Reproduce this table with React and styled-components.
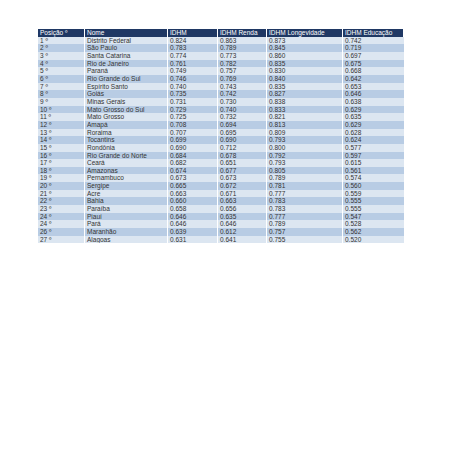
import React from "react";
import styled, { createGlobalStyle } from "styled-components";

const GlobalStyle = createGlobalStyle`
  html, body {
    margin: 0;
    padding: 0;
    background: #ffffff;
  }
`;

const Page = styled.div`
  width: 452px;
  height: 452px;
  padding: 29px 0 0 38px;
  box-sizing: border-box;
  font-family: "Liberation Sans", Arial, sans-serif;
`;

const Table = styled.div`
  display: grid;
  grid-template-columns: 47px 83px 50px 49px 76px 61px;
  grid-auto-rows: 7.67px;
  width: 366px;
`;

const HeadCell = styled.div`
  background: #1f3864;
  color: #ffffff;
  font-size: 6.5px;
  line-height: 7.67px;
  padding-left: 2px;
  border-right: 1px solid #ffffff;
  white-space: nowrap;
  overflow: hidden;
  &:last-child {
    border-right: none;
  }
`;

const Cell = styled.div`
  background: ${(p) => (p.$dark ? "#b8cce4" : "#dce6f1")};
  color: #333333;
  font-size: 6.5px;
  line-height: 7.67px;
  padding-left: 2px;
  border-right: ${(p) => (p.$last ? "none" : "1px solid #ffffff")};
  white-space: nowrap;
  overflow: hidden;
`;

const headers = [
  "Posição º",
  "Nome",
  "IDHM",
  "IDHM Renda",
  "IDHM Longevidade",
  "IDHM Educação",
];

const rows = [
  ["1 º", "Distrito Federal", "0.824", "0.863", "0.873", "0.742"],
  ["2 º", "São Paulo", "0.783", "0.789", "0.845", "0.719"],
  ["3 º", "Santa Catarina", "0.774", "0.773", "0.860", "0.697"],
  ["4 º", "Rio de Janeiro", "0.761", "0.782", "0.835", "0.675"],
  ["5 º", "Paraná", "0.749", "0.757", "0.830", "0.668"],
  ["6 º", "Rio Grande do Sul", "0.746", "0.769", "0.840", "0.642"],
  ["7 º", "Espírito Santo", "0.740", "0.743", "0.835", "0.653"],
  ["8 º", "Goiás", "0.735", "0.742", "0.827", "0.646"],
  ["9 º", "Minas Gerais", "0.731", "0.730", "0.838", "0.638"],
  ["10 º", "Mato Grosso do Sul", "0.729", "0.740", "0.833", "0.629"],
  ["11 º", "Mato Grosso", "0.725", "0.732", "0.821", "0.635"],
  ["12 º", "Amapá", "0.708", "0.694", "0.813", "0.629"],
  ["13 º", "Roraima", "0.707", "0.695", "0.809", "0.628"],
  ["14 º", "Tocantins", "0.699", "0.690", "0.793", "0.624"],
  ["15 º", "Rondônia", "0.690", "0.712", "0.800", "0.577"],
  ["16 º", "Rio Grande do Norte", "0.684", "0.678", "0.792", "0.597"],
  ["17 º", "Ceará", "0.682", "0.651", "0.793", "0.615"],
  ["18 º", "Amazonas", "0.674", "0.677", "0.805", "0.561"],
  ["19 º", "Pernambuco", "0.673", "0.673", "0.789", "0.574"],
  ["20 º", "Sergipe", "0.665", "0.672", "0.781", "0.560"],
  ["21 º", "Acre", "0.663", "0.671", "0.777", "0.559"],
  ["22 º", "Bahia", "0.660", "0.663", "0.783", "0.555"],
  ["23 º", "Paraíba", "0.658", "0.656", "0.783", "0.555"],
  ["24 º", "Piauí", "0.646", "0.635", "0.777", "0.547"],
  ["24 º", "Pará", "0.646", "0.646", "0.789", "0.528"],
  ["26 º", "Maranhão", "0.639", "0.612", "0.757", "0.562"],
  ["27 º", "Alagoas", "0.631", "0.641", "0.755", "0.520"],
];

export default function App() {
  return (
    <>
      <GlobalStyle />
      <Page>
        <Table>
          {headers.map((h) => (
            <HeadCell key={h}>{h}</HeadCell>
          ))}
          {rows.map((r, i) =>
            r.map((v, j) => (
              <Cell key={i + "-" + j} $dark={i % 2 === 1} $last={j === 5}>
                {v}
              </Cell>
            ))
          )}
        </Table>
      </Page>
    </>
  );
}
